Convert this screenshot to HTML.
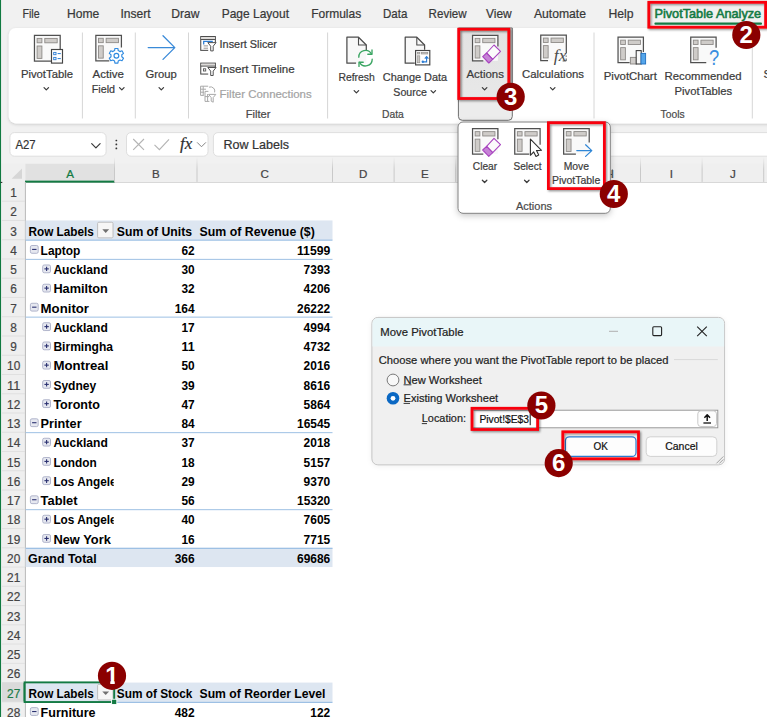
<!DOCTYPE html>
<html lang="en"><head><meta charset="utf-8"><title>Move PivotTable</title>
<style>
html,body{margin:0;padding:0;background:#fff;}
body{width:767px;height:717px;overflow:hidden;}
svg{display:block;font-family:"Liberation Sans", sans-serif;}
text{white-space:pre;}
</style></head><body>
<svg width="767" height="717" viewBox="0 0 767 717">
<defs>
<filter id="rsh" x="-20%" y="-20%" width="150%" height="150%"><feDropShadow dx="1.2" dy="1.2" stdDeviation="1.1" flood-color="#000" flood-opacity="0.45"/></filter>
<filter id="psh" x="-10%" y="-10%" width="120%" height="130%"><feDropShadow dx="0" dy="2" stdDeviation="3" flood-color="#000" flood-opacity="0.22"/></filter>
<filter id="dsh" x="-10%" y="-10%" width="120%" height="130%"><feDropShadow dx="0" dy="1" stdDeviation="2.5" flood-color="#000" flood-opacity="0.06"/></filter>
<filter id="ribsh" x="-5%" y="-10%" width="110%" height="130%"><feDropShadow dx="0" dy="1" stdDeviation="1.6" flood-color="#000" flood-opacity="0.16"/></filter>
<linearGradient id="actg" x1="0" y1="0" x2="0" y2="1"><stop offset="0" stop-color="#c9cccb"/><stop offset="0.06" stop-color="#e3e3e3"/><stop offset="1" stop-color="#e8e8e8"/></linearGradient>
<clipPath id="cA"><rect x="25" y="180" width="88.7" height="540"/></clipPath>
<linearGradient id="sepg" gradientUnits="userSpaceOnUse" x1="0" y1="157" x2="0" y2="169"><stop offset="0" stop-color="#cdcdcd" stop-opacity="0"/><stop offset="1" stop-color="#c9c9c9" stop-opacity="1"/></linearGradient>
<linearGradient id="actl" x1="0" y1="0" x2="1" y2="0"><stop offset="0" stop-color="#b9bdbc" stop-opacity="0.9"/><stop offset="1" stop-color="#d8d8d8" stop-opacity="0"/></linearGradient>
</defs>

<rect x="0.00" y="0.00" width="767.00" height="182.40" fill="#f1f1f1"/>
<rect x="0.00" y="182.40" width="767.00" height="534.60" fill="#fff"/>
<rect x="8.8" y="27.9" width="780" height="95.5" rx="7" fill="#fff" filter="url(#ribsh)"/>
<text x="22.4" y="17.8" font-size="12.2" font-weight="400" fill="#383838" stroke="#383838" stroke-width="0.22" text-anchor="start" textLength="17.2" lengthAdjust="spacingAndGlyphs">File</text>
<text x="67.0" y="17.8" font-size="12.2" font-weight="400" fill="#383838" stroke="#383838" stroke-width="0.22" text-anchor="start" textLength="32.3" lengthAdjust="spacingAndGlyphs">Home</text>
<text x="120.5" y="17.8" font-size="12.2" font-weight="400" fill="#383838" stroke="#383838" stroke-width="0.22" text-anchor="start" textLength="30.2" lengthAdjust="spacingAndGlyphs">Insert</text>
<text x="171.3" y="17.8" font-size="12.2" font-weight="400" fill="#383838" stroke="#383838" stroke-width="0.22" text-anchor="start" textLength="28.3" lengthAdjust="spacingAndGlyphs">Draw</text>
<text x="221.7" y="17.8" font-size="12.2" font-weight="400" fill="#383838" stroke="#383838" stroke-width="0.22" text-anchor="start" textLength="67.3" lengthAdjust="spacingAndGlyphs">Page Layout</text>
<text x="311.2" y="17.8" font-size="12.2" font-weight="400" fill="#383838" stroke="#383838" stroke-width="0.22" text-anchor="start" textLength="50.0" lengthAdjust="spacingAndGlyphs">Formulas</text>
<text x="383.0" y="17.8" font-size="12.2" font-weight="400" fill="#383838" stroke="#383838" stroke-width="0.22" text-anchor="start" textLength="24.4" lengthAdjust="spacingAndGlyphs">Data</text>
<text x="428.6" y="17.8" font-size="12.2" font-weight="400" fill="#383838" stroke="#383838" stroke-width="0.22" text-anchor="start" textLength="38.0" lengthAdjust="spacingAndGlyphs">Review</text>
<text x="486.0" y="17.8" font-size="12.2" font-weight="400" fill="#383838" stroke="#383838" stroke-width="0.22" text-anchor="start" textLength="25.7" lengthAdjust="spacingAndGlyphs">View</text>
<text x="533.9" y="17.8" font-size="12.2" font-weight="400" fill="#383838" stroke="#383838" stroke-width="0.22" text-anchor="start" textLength="52.1" lengthAdjust="spacingAndGlyphs">Automate</text>
<text x="608.4" y="17.8" font-size="12.2" font-weight="400" fill="#383838" stroke="#383838" stroke-width="0.22" text-anchor="start" textLength="25.1" lengthAdjust="spacingAndGlyphs">Help</text>
<text x="654.4" y="17.8" font-size="12.2" font-weight="400" fill="#137a43" stroke="#137a43" stroke-width="0.55" text-anchor="start" textLength="106.8" lengthAdjust="spacingAndGlyphs">PivotTable Analyze</text>
<rect x="654.40" y="22.60" width="107.60" height="2.20" fill="#137a43" rx="1"/>
<line x1="82.40" y1="32.50" x2="82.40" y2="118.50" stroke="#d6d6d6" stroke-width="1"/>
<line x1="135.30" y1="32.50" x2="135.30" y2="118.50" stroke="#d6d6d6" stroke-width="1"/>
<line x1="188.50" y1="32.50" x2="188.50" y2="118.50" stroke="#d6d6d6" stroke-width="1"/>
<line x1="327.60" y1="32.50" x2="327.60" y2="118.50" stroke="#d6d6d6" stroke-width="1"/>
<line x1="594.00" y1="32.50" x2="594.00" y2="118.50" stroke="#d6d6d6" stroke-width="1"/>
<line x1="752.30" y1="32.50" x2="752.30" y2="118.50" stroke="#d6d6d6" stroke-width="1"/>
<g transform="translate(33.80 34.80) scale(1.000)">
<rect x="0.6" y="0.6" width="25.8" height="25.8" fill="#f9f9f9"/>
<path d="M17.4 26.4H0.65V0.65H26.4V14.4" fill="none" stroke="#505050" stroke-width="1.25" stroke-linejoin="miter"/>
<rect x="3.3" y="3.6" width="4.8" height="4.4" fill="#cfccc9" stroke="#8d8a87" stroke-width="0.9"/>
<rect x="11" y="3.6" width="12.4" height="4.4" fill="#cfccc9" stroke="#8d8a87" stroke-width="0.9"/>
<rect x="3.3" y="11.2" width="4.8" height="12.4" fill="#cfccc9" stroke="#8d8a87" stroke-width="0.9"/>
</g>
<rect x="51.5" y="49.5" width="11" height="13.6" fill="#fff" stroke="#444" stroke-width="1.15"/>
<rect x="53.7" y="52.4" width="2.3" height="2.3" fill="#fff" stroke="#2b7cd3" stroke-width="0.9"/><rect x="53.7" y="57.4" width="2.3" height="2.3" fill="#fff" stroke="#2b7cd3" stroke-width="0.9"/>
<path d="M57.6 53.6h3.2M57.6 58.6h3.2" stroke="#2b7cd3" stroke-width="1"/>
<text x="20.9" y="77.7" font-size="11.6" font-weight="400" fill="#3b3b3b" stroke="#3b3b3b" stroke-width="0.22" text-anchor="start" textLength="52.1" lengthAdjust="spacingAndGlyphs">PivotTable</text>
<path d="M44.05 87.67 L46.30 89.92 L48.55 87.67" fill="none" stroke="#3a3a3a" stroke-width="1.25" stroke-linecap="round" stroke-linejoin="round"/>
<g transform="translate(95.20 34.70) scale(0.993)">
<rect x="0.6" y="0.6" width="25.8" height="25.8" fill="#f9f9f9"/>
<path d="M14.2 26.4H0.65V0.65H26.4V13" fill="none" stroke="#505050" stroke-width="1.25" stroke-linejoin="miter"/>
<rect x="3.3" y="3.6" width="4.8" height="4.4" fill="#cfccc9" stroke="#8d8a87" stroke-width="0.9"/>
<rect x="11" y="3.6" width="12.4" height="4.4" fill="#cfccc9" stroke="#8d8a87" stroke-width="0.9"/>
<rect x="3.3" y="11.2" width="4.8" height="12.4" fill="#cfccc9" stroke="#8d8a87" stroke-width="0.9"/>
</g>
<path d="M114.57 50.61 L114.91 48.45 L117.89 48.45 L118.23 50.61 L119.97 51.62 L122.02 50.83 L123.51 53.42 L121.81 54.80 L121.81 56.80 L123.51 58.18 L122.02 60.77 L119.97 59.98 L118.23 60.99 L117.89 63.15 L114.91 63.15 L114.57 60.99 L112.83 59.98 L110.78 60.77 L109.29 58.18 L110.99 56.80 L110.99 54.80 L109.29 53.42 L110.78 50.83 L112.83 51.62Z" fill="#fff" stroke="#2f8ae0" stroke-width="1.15" stroke-linejoin="round"/>
<circle cx="116.4" cy="55.8" r="2.4" fill="#fff" stroke="#2f8ae0" stroke-width="1.15"/>
<text x="92.6" y="77.7" font-size="11.6" font-weight="400" fill="#3b3b3b" stroke="#3b3b3b" stroke-width="0.22" text-anchor="start" textLength="31.3" lengthAdjust="spacingAndGlyphs">Active</text>
<text x="91.8" y="92.8" font-size="11.6" font-weight="400" fill="#3b3b3b" stroke="#3b3b3b" stroke-width="0.22" text-anchor="start" textLength="23.2" lengthAdjust="spacingAndGlyphs">Field</text>
<path d="M119.55 87.67 L121.80 89.92 L124.05 87.67" fill="none" stroke="#3a3a3a" stroke-width="1.25" stroke-linecap="round" stroke-linejoin="round"/>
<path d="M148.2 47.6H174.4M163 35.7L174.8 47.6L163 59.4" fill="none" stroke="#3a8ad8" stroke-width="1.3" stroke-linecap="round" stroke-linejoin="round"/>
<text x="145.5" y="77.7" font-size="11.6" font-weight="400" fill="#3b3b3b" stroke="#3b3b3b" stroke-width="0.22" text-anchor="start" textLength="31.3" lengthAdjust="spacingAndGlyphs">Group</text>
<path d="M159.05 87.67 L161.30 89.92 L163.55 87.67" fill="none" stroke="#3a3a3a" stroke-width="1.25" stroke-linecap="round" stroke-linejoin="round"/>
<g transform="translate(200.20 36.00)">
<rect x="0.55" y="0.55" width="14.6" height="13.8" fill="#fff" stroke="#4a4a4a" stroke-width="1.05"/>
<rect x="1.1" y="1.1" width="13.5" height="2" fill="#dddbd9"/>
<path d="M0.6 3.5H15.1" stroke="#4a4a4a" stroke-width="0.95"/>
<path d="M3.5 8.4V5.3H12.6" fill="none" stroke="#2b7cd3" stroke-width="1.25"/>
<path d="M3.4 9.9H7.8M3.4 12.2H7.8" stroke="#8f8d8b" stroke-width="0.95"/>
<rect x="8" y="6.4" width="8.6" height="9.4" fill="#fff"/>
<path d="M7.6 6.6H15.9L13 10.2V14.9H10.5V10.2Z" fill="#fff" stroke="#4a4a4a" stroke-width="0.95" stroke-linejoin="round"/>
</g>
<text x="219.6" y="48.0" font-size="11.6" font-weight="400" fill="#3b3b3b" stroke="#3b3b3b" stroke-width="0.22" text-anchor="start" textLength="57.4" lengthAdjust="spacingAndGlyphs">Insert Slicer</text>
<g transform="translate(200.20 62.60)">
<rect x="0.55" y="0.55" width="14.6" height="10.9" fill="#fff" stroke="#4a4a4a" stroke-width="1.05"/>
<rect x="1.1" y="1.1" width="13.5" height="2" fill="#dddbd9"/>
<path d="M0.6 3.5H15.1" stroke="#4a4a4a" stroke-width="0.95"/>
<rect x="3.3" y="6.2" width="2.2" height="2.2" fill="#fff" stroke="#555" stroke-width="0.9"/>
<rect x="8" y="4.6" width="8.6" height="8.6" fill="#fff"/>
<path d="M7.6 4.9H15.9L13 8.5V12.9H10.5V8.5Z" fill="#fff" stroke="#4a4a4a" stroke-width="0.95" stroke-linejoin="round"/>
</g>
<text x="219.6" y="73.0" font-size="11.6" font-weight="400" fill="#3b3b3b" stroke="#3b3b3b" stroke-width="0.22" text-anchor="start" textLength="75.1" lengthAdjust="spacingAndGlyphs">Insert Timeline</text>
<g opacity="0.85" fill="none" stroke="#9a9a9a" stroke-width="1">
<path d="M200.6 86.2H208.2M200.6 86.2V95.4H203.8M203.2 86.2V95.4M200.6 89.2H206M200.6 92.2H204"/>
<path d="M205 91.4V101.4H209.4M205 91.4H208.4M207.6 94V101.4M205 96.6H209"/>
<path d="M209 87.2A4.2 4.2 0 0 1 214.6 92.4"/>
<path d="M208.6 94.4H215.8L213.2 97.6V102.2L211.2 101.2V97.6Z" fill="#fff" stroke-linejoin="round"/>
</g>
<text x="219.6" y="97.8" font-size="11.6" font-weight="400" fill="#a3a3a3" stroke="#a3a3a3" stroke-width="0.22" text-anchor="start" textLength="92.1" lengthAdjust="spacingAndGlyphs">Filter Connections</text>
<text x="245.7" y="117.6" font-size="11.4" font-weight="400" fill="#4a4a4a" stroke="#4a4a4a" stroke-width="0.22" text-anchor="start" textLength="24.8" lengthAdjust="spacingAndGlyphs">Filter</text>
<path d="M346.90 37.20H358.50L366.30 45.00V63.20H346.90Z" fill="#f8f8f8"/>
<path d="M356.10 63.20H346.90V37.20H358.50L366.30 45.00V50.40" fill="none" stroke="#4d4d4d" stroke-width="1.25" stroke-linejoin="round"/>
<path d="M358.50 37.20V45.00H366.30" fill="none" stroke="#4d4d4d" stroke-width="1.1" stroke-linejoin="round"/>
<path d="M358.8 57.2A6.7 6.7 0 0 1 371.4 54M372.2 59.2A6.7 6.7 0 0 1 359.6 62.4" fill="none" stroke="#3aa562" stroke-width="1.35" stroke-linecap="round"/>
<path d="M372 50V54.2H367.8M359 66.4V62.2H363.2" fill="none" stroke="#3aa562" stroke-width="1.35" stroke-linecap="round" stroke-linejoin="round"/>
<text x="338.4" y="80.9" font-size="11.6" font-weight="400" fill="#3b3b3b" stroke="#3b3b3b" stroke-width="0.22" text-anchor="start" textLength="36.5" lengthAdjust="spacingAndGlyphs">Refresh</text>
<path d="M354.15 90.67 L356.40 92.92 L358.65 90.67" fill="none" stroke="#3a3a3a" stroke-width="1.25" stroke-linecap="round" stroke-linejoin="round"/>
<path d="M405.20 37.20H416.80L424.60 45.00V63.20H405.20Z" fill="#f8f8f8"/>
<path d="M414.80 63.20H405.20V37.20H416.80L424.60 45.00V49.80" fill="none" stroke="#4d4d4d" stroke-width="1.25" stroke-linejoin="round"/>
<path d="M416.80 37.20V45.00H424.60" fill="none" stroke="#4d4d4d" stroke-width="1.1" stroke-linejoin="round"/>
<rect x="415.6" y="50.5" width="14.2" height="14.4" fill="#fff" stroke="#444" stroke-width="1.15"/>
<rect x="417.6" y="52.4" width="2.2" height="1.6" fill="#c9c6c3" stroke="#8d8a87" stroke-width="0.6"/><rect x="421.2" y="52.4" width="6.6" height="1.6" fill="#c9c6c3" stroke="#8d8a87" stroke-width="0.6"/><rect x="417.6" y="55.8" width="2.2" height="7" fill="#c9c6c3" stroke="#8d8a87" stroke-width="0.6"/>
<path d="M422.8 61.8H426.6V57M424.8 58.6L426.6 56.6L428.4 58.6" fill="none" stroke="#2b7cd3" stroke-width="1.15"/>
<circle cx="422.8" cy="61.8" r="1.2" fill="#2b7cd3"/>
<text x="382.8" y="80.9" font-size="11.6" font-weight="400" fill="#3b3b3b" stroke="#3b3b3b" stroke-width="0.22" text-anchor="start" textLength="64.4" lengthAdjust="spacingAndGlyphs">Change Data</text>
<text x="393.3" y="95.8" font-size="11.6" font-weight="400" fill="#3b3b3b" stroke="#3b3b3b" stroke-width="0.22" text-anchor="start" textLength="33.7" lengthAdjust="spacingAndGlyphs">Source</text>
<path d="M431.05 90.67 L433.30 92.92 L435.55 90.67" fill="none" stroke="#3a3a3a" stroke-width="1.25" stroke-linecap="round" stroke-linejoin="round"/>
<text x="382.0" y="117.6" font-size="11.4" font-weight="400" fill="#4a4a4a" stroke="#4a4a4a" stroke-width="0.22" text-anchor="start" textLength="21.8" lengthAdjust="spacingAndGlyphs">Data</text>
<path d="M458.4 28H512.3V116.4Q512.3 120.3 508.4 120.3H462.3Q458.4 120.3 458.4 116.4Z" fill="#ececec" stroke="#6e6e6e" stroke-width="1"/>
<rect x="458.4" y="28.4" width="51.6" height="71" fill="url(#actg)"/>
<rect x="460" y="30" width="4.2" height="68" fill="url(#actl)"/>
<rect x="510" y="29" width="1.8" height="70" fill="#b4b9b7"/>
<g transform="translate(471.90 34.80) scale(0.985)">
<rect x="0.6" y="0.6" width="25.8" height="25.8" fill="#f9f9f9"/>
<path d="M11.6 26.4H0.65V0.65H26.4V12" fill="none" stroke="#505050" stroke-width="1.25" stroke-linejoin="miter"/>
<rect x="3.3" y="3.6" width="4.8" height="4.4" fill="#cfccc9" stroke="#8d8a87" stroke-width="0.9"/>
<rect x="11" y="3.6" width="12.4" height="4.4" fill="#cfccc9" stroke="#8d8a87" stroke-width="0.9"/>
<rect x="3.3" y="11.2" width="4.8" height="12.4" fill="#cfccc9" stroke="#8d8a87" stroke-width="0.9"/>
</g>
<g transform="translate(471.90 34.80)">
<path d="M14.7 18.2L22.1 10.2L28.6 16.6L20.8 24.6Z" fill="#fbfbfb" stroke="#a844bf" stroke-width="1.1" stroke-linejoin="round"/>
<path d="M10.8 21.9L14.7 18.2L20.8 24.6L16.9 28.2Z" fill="#c683d6" stroke="#a844bf" stroke-width="1.1" stroke-linejoin="round"/>
</g>
<text x="466.4" y="77.7" font-size="11.6" font-weight="400" fill="#3b3b3b" stroke="#3b3b3b" stroke-width="0.22" text-anchor="start" textLength="37.5" lengthAdjust="spacingAndGlyphs">Actions</text>
<path d="M482.35 87.67 L484.60 89.92 L486.85 87.67" fill="none" stroke="#3a3a3a" stroke-width="1.25" stroke-linecap="round" stroke-linejoin="round"/>
<rect x="458.70" y="29.20" width="50.10" height="69.30" fill="none" stroke="#f9000a" stroke-width="2.8" filter="url(#rsh)"/>
<g transform="translate(540.10 34.50) scale(0.993)">
<rect x="0.6" y="0.6" width="25.8" height="25.8" fill="#f9f9f9"/>
<path d="M8 26.4H0.65V0.65H26.4V19" fill="none" stroke="#505050" stroke-width="1.25" stroke-linejoin="miter"/>
<rect x="3.3" y="3.6" width="4.8" height="4.4" fill="#cfccc9" stroke="#8d8a87" stroke-width="0.9"/>
<rect x="11" y="3.6" width="12.4" height="4.4" fill="#cfccc9" stroke="#8d8a87" stroke-width="0.9"/>
<rect x="3.3" y="11.2" width="4.8" height="12.4" fill="#cfccc9" stroke="#8d8a87" stroke-width="0.9"/>
</g>
<path d="M566.2 55.4V56.8M566.2 58.4V61M566.2 61H562.6" fill="none" stroke="#666" stroke-width="1.1"/>
<text x="553.8" y="60.6" font-family="'Liberation Serif', serif" font-style="italic" font-size="17.5" fill="#4a4a4a">fx</text>
<text x="522.0" y="77.7" font-size="11.6" font-weight="400" fill="#3b3b3b" stroke="#3b3b3b" stroke-width="0.22" text-anchor="start" textLength="62.0" lengthAdjust="spacingAndGlyphs">Calculations</text>
<path d="M550.45 87.67 L552.70 89.92 L554.95 87.67" fill="none" stroke="#3a3a3a" stroke-width="1.25" stroke-linecap="round" stroke-linejoin="round"/>
<g transform="translate(617.40 36.60) scale(0.985)">
<rect x="0.6" y="0.6" width="25.8" height="25.8" fill="#f9f9f9"/>
<path d="M12.4 26.4H0.65V0.65H26.4V15.6" fill="none" stroke="#505050" stroke-width="1.25" stroke-linejoin="miter"/>
<rect x="3.3" y="3.6" width="4.8" height="4.4" fill="#cfccc9" stroke="#8d8a87" stroke-width="0.9"/>
<rect x="11" y="3.6" width="12.4" height="4.4" fill="#cfccc9" stroke="#8d8a87" stroke-width="0.9"/>
<rect x="3.3" y="11.2" width="4.8" height="12.4" fill="#cfccc9" stroke="#8d8a87" stroke-width="0.9"/>
</g>
<rect x="630.4" y="57.4" width="6" height="6.6" fill="#d0cdca" stroke="#8d8a87" stroke-width="0.95"/>
<rect x="636.2" y="50.6" width="5" height="13.4" fill="#fafafa" stroke="#3a3a3a" stroke-width="1.05"/>
<rect x="641" y="53.4" width="4.6" height="10.6" fill="#55a6ea" stroke="#2473c2" stroke-width="0.95"/>
<text x="603.8" y="79.8" font-size="11.6" font-weight="400" fill="#3b3b3b" stroke="#3b3b3b" stroke-width="0.22" text-anchor="start" textLength="53.0" lengthAdjust="spacingAndGlyphs">PivotChart</text>
<g transform="translate(690.10 36.60) scale(0.985)">
<rect x="0.6" y="0.6" width="25.8" height="25.8" fill="#f9f9f9"/>
<path d="M16.4 26.4H0.65V0.65H26.4V11.4" fill="none" stroke="#505050" stroke-width="1.25" stroke-linejoin="miter"/>
<rect x="3.3" y="3.6" width="4.8" height="4.4" fill="#cfccc9" stroke="#8d8a87" stroke-width="0.9"/>
<rect x="11" y="3.6" width="12.4" height="4.4" fill="#cfccc9" stroke="#8d8a87" stroke-width="0.9"/>
<rect x="3.3" y="11.2" width="4.8" height="12.4" fill="#cfccc9" stroke="#8d8a87" stroke-width="0.9"/>
</g>
<text x="709.0" y="65.3" font-size="22.5" font-weight="400" fill="#3a8ee0" text-anchor="start" textLength="10.2" lengthAdjust="spacingAndGlyphs">?</text>
<text x="664.6" y="79.8" font-size="11.6" font-weight="400" fill="#3b3b3b" stroke="#3b3b3b" stroke-width="0.22" text-anchor="start" textLength="76.9" lengthAdjust="spacingAndGlyphs">Recommended</text>
<text x="674.6" y="94.9" font-size="11.6" font-weight="400" fill="#3b3b3b" stroke="#3b3b3b" stroke-width="0.22" text-anchor="start" textLength="57.6" lengthAdjust="spacingAndGlyphs">PivotTables</text>
<text x="660.6" y="117.6" font-size="11.4" font-weight="400" fill="#4a4a4a" stroke="#4a4a4a" stroke-width="0.22" text-anchor="start" textLength="24.0" lengthAdjust="spacingAndGlyphs">Tools</text>
<text x="763.4" y="77.7" font-size="11.6" font-weight="400" fill="#3b3b3b" stroke="#3b3b3b" stroke-width="0.22" text-anchor="start">S</text>
<rect x="648.80" y="2.30" width="116.80" height="24.90" fill="none" stroke="#f9000a" stroke-width="2.8" filter="url(#rsh)"/>
<circle cx="746.3" cy="35.0" r="14.1" fill="#8b0000"/>
<text x="746.3" y="42.8" font-size="24" font-weight="700" fill="#fff" text-anchor="middle">2</text>
<circle cx="510.7" cy="96.8" r="14.1" fill="#8b0000"/>
<text x="510.7" y="104.6" font-size="24" font-weight="700" fill="#fff" text-anchor="middle">3</text>
<rect x="9.90" y="132.60" width="96.20" height="23.60" fill="#fff" stroke="#dedede" stroke-width="1" rx="4.5"/>
<text x="15.4" y="148.8" font-size="12.8" font-weight="400" fill="#333" stroke="#333" stroke-width="0.22" text-anchor="start" textLength="20.2" lengthAdjust="spacingAndGlyphs">A27</text>
<path d="M91.70 143.60 L95.90 147.80 L100.10 143.60" fill="none" stroke="#3a3a3a" stroke-width="1.2" stroke-linecap="round" stroke-linejoin="round"/>
<rect x="115.5" y="139.65" width="1.7" height="1.7" rx="0.5" fill="#333"/>
<rect x="115.5" y="143.55" width="1.7" height="1.7" rx="0.5" fill="#333"/>
<rect x="115.5" y="147.45" width="1.7" height="1.7" rx="0.5" fill="#333"/>
<rect x="126.50" y="132.60" width="81.50" height="23.60" fill="#fff" stroke="#dedede" stroke-width="1" rx="4.5"/>
<path d="M133.2 139L144 149.8M144 139L133.2 149.8" stroke="#b4b4b4" stroke-width="1.15"/>
<path d="M154.5 144.8L159.4 149.6L169 139.4" fill="none" stroke="#b4b4b4" stroke-width="1.15"/>
<text x="180" y="149.3" font-family="'Liberation Serif', serif" font-style="italic" font-size="17" fill="#2e2e2e" stroke="#2e2e2e" stroke-width="0.2">fx</text>
<path d="M197.40 142.65 L201.50 146.75 L205.60 142.65" fill="none" stroke="#858585" stroke-width="1.0" stroke-linecap="round" stroke-linejoin="round"/>
<rect x="213.40" y="132.60" width="600.00" height="23.60" fill="#fff" stroke="#dedede" stroke-width="1" rx="4.5"/>
<text x="223.5" y="148.8" font-size="12.8" font-weight="400" fill="#333" stroke="#333" stroke-width="0.22" text-anchor="start" textLength="65.5" lengthAdjust="spacingAndGlyphs">Row Labels</text>
<rect x="0.00" y="163.80" width="767.00" height="18.60" fill="#efefef"/>
<rect x="25.40" y="163.80" width="89.10" height="18.60" fill="#e1e1e1"/>
<rect x="25.00" y="180.80" width="89.50" height="1.80" fill="#137a43"/>
<line x1="0.00" y1="182.50" x2="767.00" y2="182.50" stroke="#cfcfcf" stroke-width="0.8"/>
<rect x="25.00" y="180.80" width="89.50" height="1.80" fill="#137a43"/>
<text x="70.0" y="177.5" font-size="11.6" font-weight="400" fill="#137a43" stroke="#137a43" stroke-width="0.22" text-anchor="middle">A</text>
<rect x="114.00" y="157.00" width="1.00" height="24.90" fill="url(#sepg)"/>
<text x="155.8" y="177.5" font-size="11.6" font-weight="400" fill="#444" stroke="#444" stroke-width="0.22" text-anchor="middle">B</text>
<rect x="196.50" y="157.00" width="1.00" height="24.90" fill="url(#sepg)"/>
<text x="264.8" y="177.5" font-size="11.6" font-weight="400" fill="#444" stroke="#444" stroke-width="0.22" text-anchor="middle">C</text>
<rect x="332.00" y="157.00" width="1.00" height="24.90" fill="url(#sepg)"/>
<text x="363.3" y="177.5" font-size="11.6" font-weight="400" fill="#444" stroke="#444" stroke-width="0.22" text-anchor="middle">D</text>
<rect x="393.60" y="157.00" width="1.00" height="24.90" fill="url(#sepg)"/>
<text x="424.9" y="177.5" font-size="11.6" font-weight="400" fill="#444" stroke="#444" stroke-width="0.22" text-anchor="middle">E</text>
<rect x="455.20" y="157.00" width="1.00" height="24.90" fill="url(#sepg)"/>
<text x="486.5" y="177.5" font-size="11.6" font-weight="400" fill="#444" stroke="#444" stroke-width="0.22" text-anchor="middle">F</text>
<rect x="516.80" y="157.00" width="1.00" height="24.90" fill="url(#sepg)"/>
<text x="548.1" y="177.5" font-size="11.6" font-weight="400" fill="#444" stroke="#444" stroke-width="0.22" text-anchor="middle">G</text>
<rect x="578.40" y="157.00" width="1.00" height="24.90" fill="url(#sepg)"/>
<text x="609.7" y="177.5" font-size="11.6" font-weight="400" fill="#444" stroke="#444" stroke-width="0.22" text-anchor="middle">H</text>
<rect x="640.00" y="157.00" width="1.00" height="24.90" fill="url(#sepg)"/>
<text x="671.3" y="177.5" font-size="11.6" font-weight="400" fill="#444" stroke="#444" stroke-width="0.22" text-anchor="middle">I</text>
<rect x="701.60" y="157.00" width="1.00" height="24.90" fill="url(#sepg)"/>
<text x="732.9" y="177.5" font-size="11.6" font-weight="400" fill="#444" stroke="#444" stroke-width="0.22" text-anchor="middle">J</text>
<rect x="763.20" y="157.00" width="1.00" height="24.90" fill="url(#sepg)"/>
<text x="794.5" y="177.5" font-size="11.6" font-weight="400" fill="#444" stroke="#444" stroke-width="0.22" text-anchor="middle">K</text>
<path d="M22 168.4V178.8H11.6Z" fill="#d6d6d6"/>
<rect x="0.00" y="181.95" width="25.00" height="535.05" fill="#efefef"/>
<line x1="25.40" y1="181.95" x2="25.40" y2="717.00" stroke="#b8b8b8" stroke-width="1"/>
<rect x="2.00" y="682.58" width="23.00" height="19.25" fill="#dadada"/>
<rect x="23.60" y="682.58" width="1.80" height="19.25" fill="#137a43"/>
<text x="13.5" y="196.9" font-size="12.6" font-weight="400" fill="#444" stroke="#444" stroke-width="0.22" text-anchor="middle" textLength="6.6" lengthAdjust="spacingAndGlyphs">1</text>
<line x1="2.00" y1="201.20" x2="25.00" y2="201.20" stroke="#dcdcdc" stroke-width="0.8"/>
<text x="13.5" y="216.2" font-size="12.6" font-weight="400" fill="#444" stroke="#444" stroke-width="0.22" text-anchor="middle" textLength="6.6" lengthAdjust="spacingAndGlyphs">2</text>
<line x1="2.00" y1="220.46" x2="25.00" y2="220.46" stroke="#dcdcdc" stroke-width="0.8"/>
<text x="13.5" y="235.5" font-size="12.6" font-weight="400" fill="#444" stroke="#444" stroke-width="0.22" text-anchor="middle" textLength="6.6" lengthAdjust="spacingAndGlyphs">3</text>
<line x1="2.00" y1="239.71" x2="25.00" y2="239.71" stroke="#dcdcdc" stroke-width="0.8"/>
<text x="13.5" y="254.7" font-size="12.6" font-weight="400" fill="#444" stroke="#444" stroke-width="0.22" text-anchor="middle" textLength="6.6" lengthAdjust="spacingAndGlyphs">4</text>
<line x1="2.00" y1="258.97" x2="25.00" y2="258.97" stroke="#dcdcdc" stroke-width="0.8"/>
<text x="13.5" y="274.0" font-size="12.6" font-weight="400" fill="#444" stroke="#444" stroke-width="0.22" text-anchor="middle" textLength="6.6" lengthAdjust="spacingAndGlyphs">5</text>
<line x1="2.00" y1="278.22" x2="25.00" y2="278.22" stroke="#dcdcdc" stroke-width="0.8"/>
<text x="13.5" y="293.2" font-size="12.6" font-weight="400" fill="#444" stroke="#444" stroke-width="0.22" text-anchor="middle" textLength="6.6" lengthAdjust="spacingAndGlyphs">6</text>
<line x1="2.00" y1="297.48" x2="25.00" y2="297.48" stroke="#dcdcdc" stroke-width="0.8"/>
<text x="13.5" y="312.5" font-size="12.6" font-weight="400" fill="#444" stroke="#444" stroke-width="0.22" text-anchor="middle" textLength="6.6" lengthAdjust="spacingAndGlyphs">7</text>
<line x1="2.00" y1="316.74" x2="25.00" y2="316.74" stroke="#dcdcdc" stroke-width="0.8"/>
<text x="13.5" y="331.7" font-size="12.6" font-weight="400" fill="#444" stroke="#444" stroke-width="0.22" text-anchor="middle" textLength="6.6" lengthAdjust="spacingAndGlyphs">8</text>
<line x1="2.00" y1="335.99" x2="25.00" y2="335.99" stroke="#dcdcdc" stroke-width="0.8"/>
<text x="13.5" y="351.0" font-size="12.6" font-weight="400" fill="#444" stroke="#444" stroke-width="0.22" text-anchor="middle" textLength="6.6" lengthAdjust="spacingAndGlyphs">9</text>
<line x1="2.00" y1="355.25" x2="25.00" y2="355.25" stroke="#dcdcdc" stroke-width="0.8"/>
<text x="13.7" y="370.2" font-size="12.6" font-weight="400" fill="#444" stroke="#444" stroke-width="0.22" text-anchor="middle" textLength="13.2" lengthAdjust="spacingAndGlyphs">10</text>
<line x1="2.00" y1="374.50" x2="25.00" y2="374.50" stroke="#dcdcdc" stroke-width="0.8"/>
<text x="13.7" y="389.5" font-size="12.6" font-weight="400" fill="#444" stroke="#444" stroke-width="0.22" text-anchor="middle" textLength="13.2" lengthAdjust="spacingAndGlyphs">11</text>
<line x1="2.00" y1="393.75" x2="25.00" y2="393.75" stroke="#dcdcdc" stroke-width="0.8"/>
<text x="13.7" y="408.8" font-size="12.6" font-weight="400" fill="#444" stroke="#444" stroke-width="0.22" text-anchor="middle" textLength="13.2" lengthAdjust="spacingAndGlyphs">12</text>
<line x1="2.00" y1="413.01" x2="25.00" y2="413.01" stroke="#dcdcdc" stroke-width="0.8"/>
<text x="13.7" y="428.0" font-size="12.6" font-weight="400" fill="#444" stroke="#444" stroke-width="0.22" text-anchor="middle" textLength="13.2" lengthAdjust="spacingAndGlyphs">13</text>
<line x1="2.00" y1="432.26" x2="25.00" y2="432.26" stroke="#dcdcdc" stroke-width="0.8"/>
<text x="13.7" y="447.3" font-size="12.6" font-weight="400" fill="#444" stroke="#444" stroke-width="0.22" text-anchor="middle" textLength="13.2" lengthAdjust="spacingAndGlyphs">14</text>
<line x1="2.00" y1="451.52" x2="25.00" y2="451.52" stroke="#dcdcdc" stroke-width="0.8"/>
<text x="13.7" y="466.5" font-size="12.6" font-weight="400" fill="#444" stroke="#444" stroke-width="0.22" text-anchor="middle" textLength="13.2" lengthAdjust="spacingAndGlyphs">15</text>
<line x1="2.00" y1="470.77" x2="25.00" y2="470.77" stroke="#dcdcdc" stroke-width="0.8"/>
<text x="13.7" y="485.8" font-size="12.6" font-weight="400" fill="#444" stroke="#444" stroke-width="0.22" text-anchor="middle" textLength="13.2" lengthAdjust="spacingAndGlyphs">16</text>
<line x1="2.00" y1="490.03" x2="25.00" y2="490.03" stroke="#dcdcdc" stroke-width="0.8"/>
<text x="13.7" y="505.0" font-size="12.6" font-weight="400" fill="#444" stroke="#444" stroke-width="0.22" text-anchor="middle" textLength="13.2" lengthAdjust="spacingAndGlyphs">17</text>
<line x1="2.00" y1="509.28" x2="25.00" y2="509.28" stroke="#dcdcdc" stroke-width="0.8"/>
<text x="13.7" y="524.3" font-size="12.6" font-weight="400" fill="#444" stroke="#444" stroke-width="0.22" text-anchor="middle" textLength="13.2" lengthAdjust="spacingAndGlyphs">18</text>
<line x1="2.00" y1="528.54" x2="25.00" y2="528.54" stroke="#dcdcdc" stroke-width="0.8"/>
<text x="13.7" y="543.5" font-size="12.6" font-weight="400" fill="#444" stroke="#444" stroke-width="0.22" text-anchor="middle" textLength="13.2" lengthAdjust="spacingAndGlyphs">19</text>
<line x1="2.00" y1="547.79" x2="25.00" y2="547.79" stroke="#dcdcdc" stroke-width="0.8"/>
<text x="13.7" y="562.8" font-size="12.6" font-weight="400" fill="#444" stroke="#444" stroke-width="0.22" text-anchor="middle" textLength="13.2" lengthAdjust="spacingAndGlyphs">20</text>
<line x1="2.00" y1="567.05" x2="25.00" y2="567.05" stroke="#dcdcdc" stroke-width="0.8"/>
<text x="13.7" y="582.0" font-size="12.6" font-weight="400" fill="#444" stroke="#444" stroke-width="0.22" text-anchor="middle" textLength="13.2" lengthAdjust="spacingAndGlyphs">21</text>
<line x1="2.00" y1="586.30" x2="25.00" y2="586.30" stroke="#dcdcdc" stroke-width="0.8"/>
<text x="13.7" y="601.3" font-size="12.6" font-weight="400" fill="#444" stroke="#444" stroke-width="0.22" text-anchor="middle" textLength="13.2" lengthAdjust="spacingAndGlyphs">22</text>
<line x1="2.00" y1="605.56" x2="25.00" y2="605.56" stroke="#dcdcdc" stroke-width="0.8"/>
<text x="13.7" y="620.6" font-size="12.6" font-weight="400" fill="#444" stroke="#444" stroke-width="0.22" text-anchor="middle" textLength="13.2" lengthAdjust="spacingAndGlyphs">23</text>
<line x1="2.00" y1="624.81" x2="25.00" y2="624.81" stroke="#dcdcdc" stroke-width="0.8"/>
<text x="13.7" y="639.8" font-size="12.6" font-weight="400" fill="#444" stroke="#444" stroke-width="0.22" text-anchor="middle" textLength="13.2" lengthAdjust="spacingAndGlyphs">24</text>
<line x1="2.00" y1="644.07" x2="25.00" y2="644.07" stroke="#dcdcdc" stroke-width="0.8"/>
<text x="13.7" y="659.1" font-size="12.6" font-weight="400" fill="#444" stroke="#444" stroke-width="0.22" text-anchor="middle" textLength="13.2" lengthAdjust="spacingAndGlyphs">25</text>
<line x1="2.00" y1="663.33" x2="25.00" y2="663.33" stroke="#dcdcdc" stroke-width="0.8"/>
<text x="13.7" y="678.3" font-size="12.6" font-weight="400" fill="#444" stroke="#444" stroke-width="0.22" text-anchor="middle" textLength="13.2" lengthAdjust="spacingAndGlyphs">26</text>
<line x1="2.00" y1="682.58" x2="25.00" y2="682.58" stroke="#dcdcdc" stroke-width="0.8"/>
<text x="13.7" y="697.6" font-size="12.6" font-weight="400" fill="#1e7a48" stroke="#1e7a48" stroke-width="0.22" text-anchor="middle" textLength="13.2" lengthAdjust="spacingAndGlyphs">27</text>
<line x1="2.00" y1="701.84" x2="25.00" y2="701.84" stroke="#dcdcdc" stroke-width="0.8"/>
<text x="13.7" y="716.8" font-size="12.6" font-weight="400" fill="#444" stroke="#444" stroke-width="0.22" text-anchor="middle" textLength="13.2" lengthAdjust="spacingAndGlyphs">28</text>
<rect x="0.00" y="0.00" width="1.05" height="717.00" fill="#117a41"/>
<rect x="0.60" y="181.90" width="1.70" height="1.00" fill="#222"/>
<rect x="25.60" y="220.46" width="306.90" height="19.25" fill="#dde6f1"/>
<line x1="25.60" y1="240.21" x2="332.50" y2="240.21" stroke="#9dc0e4" stroke-width="1.2"/>
<text x="28.5" y="235.5" font-size="12.2" font-weight="700" fill="#000" text-anchor="start" textLength="65.4" lengthAdjust="spacingAndGlyphs">Row Labels</text>
<rect x="97.60" y="222.26" width="15.40" height="15.60" fill="#f6f6f6" stroke="#b9b9b9" stroke-width="0.9" rx="1.2"/>
<path d="M102.30 229.26H109.10L105.70 232.96Z" fill="#707070"/>
<text x="116.8" y="235.5" font-size="12.2" font-weight="700" fill="#000" text-anchor="start" textLength="75.2" lengthAdjust="spacingAndGlyphs">Sum of Units</text>
<text x="199.6" y="235.5" font-size="12.2" font-weight="700" fill="#000" text-anchor="start" textLength="115.2" lengthAdjust="spacingAndGlyphs">Sum of Revenue ($)</text>
<rect x="30.40" y="245.51" width="7.80" height="7.80" fill="#e6e8f0" stroke="#a9aec6" stroke-width="0.9" rx="1.5"/>
<path d="M32.10 249.41H36.50" stroke="#2b3170" stroke-width="1.1"/>
<text x="40.6" y="254.7" font-size="12.2" font-weight="700" fill="#000" text-anchor="start" textLength="39.8" lengthAdjust="spacingAndGlyphs">Laptop</text>
<line x1="25.60" y1="259.37" x2="332.50" y2="259.37" stroke="#9dc0e4" stroke-width="1"/>
<text x="194.6" y="254.7" font-size="12.2" font-weight="700" fill="#000" text-anchor="end" textLength="13.2" lengthAdjust="spacingAndGlyphs">62</text>
<text x="330.2" y="254.7" font-size="12.2" font-weight="700" fill="#000" text-anchor="end" textLength="33.2" lengthAdjust="spacingAndGlyphs">11599</text>
<rect x="42.70" y="264.97" width="7.80" height="7.80" fill="#e6e8f0" stroke="#a9aec6" stroke-width="0.9" rx="1.5"/>
<path d="M44.40 268.87H48.80" stroke="#2b3170" stroke-width="1.1"/>
<path d="M46.60 266.67V271.07" stroke="#2b3170" stroke-width="1.1"/>
<text x="53.4" y="274.0" font-size="12.2" font-weight="700" fill="#000" text-anchor="start" textLength="54.4" lengthAdjust="spacingAndGlyphs">Auckland</text>
<text x="194.6" y="274.0" font-size="12.2" font-weight="700" fill="#000" text-anchor="end" textLength="13.2" lengthAdjust="spacingAndGlyphs">30</text>
<text x="330.2" y="274.0" font-size="12.2" font-weight="700" fill="#000" text-anchor="end" textLength="26.6" lengthAdjust="spacingAndGlyphs">7393</text>
<rect x="42.70" y="284.22" width="7.80" height="7.80" fill="#e6e8f0" stroke="#a9aec6" stroke-width="0.9" rx="1.5"/>
<path d="M44.40 288.12H48.80" stroke="#2b3170" stroke-width="1.1"/>
<path d="M46.60 285.92V290.32" stroke="#2b3170" stroke-width="1.1"/>
<text x="53.4" y="293.2" font-size="12.2" font-weight="700" fill="#000" text-anchor="start" textLength="54.4" lengthAdjust="spacingAndGlyphs">Hamilton</text>
<text x="194.6" y="293.2" font-size="12.2" font-weight="700" fill="#000" text-anchor="end" textLength="13.2" lengthAdjust="spacingAndGlyphs">32</text>
<text x="330.2" y="293.2" font-size="12.2" font-weight="700" fill="#000" text-anchor="end" textLength="26.6" lengthAdjust="spacingAndGlyphs">4206</text>
<rect x="30.40" y="303.28" width="7.80" height="7.80" fill="#e6e8f0" stroke="#a9aec6" stroke-width="0.9" rx="1.5"/>
<path d="M32.10 307.18H36.50" stroke="#2b3170" stroke-width="1.1"/>
<text x="40.6" y="312.5" font-size="12.2" font-weight="700" fill="#000" text-anchor="start" textLength="48.4" lengthAdjust="spacingAndGlyphs">Monitor</text>
<line x1="25.60" y1="317.13" x2="332.50" y2="317.13" stroke="#9dc0e4" stroke-width="1"/>
<text x="194.6" y="312.5" font-size="12.2" font-weight="700" fill="#000" text-anchor="end" textLength="19.9" lengthAdjust="spacingAndGlyphs">164</text>
<text x="330.2" y="312.5" font-size="12.2" font-weight="700" fill="#000" text-anchor="end" textLength="33.2" lengthAdjust="spacingAndGlyphs">26222</text>
<rect x="42.70" y="322.74" width="7.80" height="7.80" fill="#e6e8f0" stroke="#a9aec6" stroke-width="0.9" rx="1.5"/>
<path d="M44.40 326.63H48.80" stroke="#2b3170" stroke-width="1.1"/>
<path d="M46.60 324.44V328.84" stroke="#2b3170" stroke-width="1.1"/>
<text x="53.4" y="331.7" font-size="12.2" font-weight="700" fill="#000" text-anchor="start" textLength="54.4" lengthAdjust="spacingAndGlyphs">Auckland</text>
<text x="194.6" y="331.7" font-size="12.2" font-weight="700" fill="#000" text-anchor="end" textLength="13.2" lengthAdjust="spacingAndGlyphs">17</text>
<text x="330.2" y="331.7" font-size="12.2" font-weight="700" fill="#000" text-anchor="end" textLength="26.6" lengthAdjust="spacingAndGlyphs">4994</text>
<rect x="42.70" y="341.99" width="7.80" height="7.80" fill="#e6e8f0" stroke="#a9aec6" stroke-width="0.9" rx="1.5"/>
<path d="M44.40 345.89H48.80" stroke="#2b3170" stroke-width="1.1"/>
<path d="M46.60 343.69V348.09" stroke="#2b3170" stroke-width="1.1"/>
<text x="53.4" y="351.0" font-size="12.2" font-weight="700" fill="#000" text-anchor="start" textLength="59.6" lengthAdjust="spacingAndGlyphs">Birmingha</text>
<text x="194.6" y="351.0" font-size="12.2" font-weight="700" fill="#000" text-anchor="end" textLength="13.2" lengthAdjust="spacingAndGlyphs">11</text>
<text x="330.2" y="351.0" font-size="12.2" font-weight="700" fill="#000" text-anchor="end" textLength="26.6" lengthAdjust="spacingAndGlyphs">4732</text>
<rect x="42.70" y="361.25" width="7.80" height="7.80" fill="#e6e8f0" stroke="#a9aec6" stroke-width="0.9" rx="1.5"/>
<path d="M44.40 365.14H48.80" stroke="#2b3170" stroke-width="1.1"/>
<path d="M46.60 362.94V367.35" stroke="#2b3170" stroke-width="1.1"/>
<text x="53.4" y="370.2" font-size="12.2" font-weight="700" fill="#000" text-anchor="start" textLength="55.0" lengthAdjust="spacingAndGlyphs">Montreal</text>
<text x="194.6" y="370.2" font-size="12.2" font-weight="700" fill="#000" text-anchor="end" textLength="13.2" lengthAdjust="spacingAndGlyphs">50</text>
<text x="330.2" y="370.2" font-size="12.2" font-weight="700" fill="#000" text-anchor="end" textLength="26.6" lengthAdjust="spacingAndGlyphs">2016</text>
<rect x="42.70" y="380.50" width="7.80" height="7.80" fill="#e6e8f0" stroke="#a9aec6" stroke-width="0.9" rx="1.5"/>
<path d="M44.40 384.40H48.80" stroke="#2b3170" stroke-width="1.1"/>
<path d="M46.60 382.20V386.60" stroke="#2b3170" stroke-width="1.1"/>
<text x="53.4" y="389.5" font-size="12.2" font-weight="700" fill="#000" text-anchor="start" textLength="42.8" lengthAdjust="spacingAndGlyphs">Sydney</text>
<text x="194.6" y="389.5" font-size="12.2" font-weight="700" fill="#000" text-anchor="end" textLength="13.2" lengthAdjust="spacingAndGlyphs">39</text>
<text x="330.2" y="389.5" font-size="12.2" font-weight="700" fill="#000" text-anchor="end" textLength="26.6" lengthAdjust="spacingAndGlyphs">8616</text>
<rect x="42.70" y="399.75" width="7.80" height="7.80" fill="#e6e8f0" stroke="#a9aec6" stroke-width="0.9" rx="1.5"/>
<path d="M44.40 403.65H48.80" stroke="#2b3170" stroke-width="1.1"/>
<path d="M46.60 401.45V405.86" stroke="#2b3170" stroke-width="1.1"/>
<text x="53.4" y="408.8" font-size="12.2" font-weight="700" fill="#000" text-anchor="start" textLength="46.4" lengthAdjust="spacingAndGlyphs">Toronto</text>
<text x="194.6" y="408.8" font-size="12.2" font-weight="700" fill="#000" text-anchor="end" textLength="13.2" lengthAdjust="spacingAndGlyphs">47</text>
<text x="330.2" y="408.8" font-size="12.2" font-weight="700" fill="#000" text-anchor="end" textLength="26.6" lengthAdjust="spacingAndGlyphs">5864</text>
<rect x="30.40" y="418.81" width="7.80" height="7.80" fill="#e6e8f0" stroke="#a9aec6" stroke-width="0.9" rx="1.5"/>
<path d="M32.10 422.71H36.50" stroke="#2b3170" stroke-width="1.1"/>
<text x="40.6" y="428.0" font-size="12.2" font-weight="700" fill="#000" text-anchor="start" textLength="41.0" lengthAdjust="spacingAndGlyphs">Printer</text>
<line x1="25.60" y1="432.66" x2="332.50" y2="432.66" stroke="#9dc0e4" stroke-width="1"/>
<text x="194.6" y="428.0" font-size="12.2" font-weight="700" fill="#000" text-anchor="end" textLength="13.2" lengthAdjust="spacingAndGlyphs">84</text>
<text x="330.2" y="428.0" font-size="12.2" font-weight="700" fill="#000" text-anchor="end" textLength="33.2" lengthAdjust="spacingAndGlyphs">16545</text>
<rect x="42.70" y="438.26" width="7.80" height="7.80" fill="#e6e8f0" stroke="#a9aec6" stroke-width="0.9" rx="1.5"/>
<path d="M44.40 442.16H48.80" stroke="#2b3170" stroke-width="1.1"/>
<path d="M46.60 439.96V444.37" stroke="#2b3170" stroke-width="1.1"/>
<text x="53.4" y="447.3" font-size="12.2" font-weight="700" fill="#000" text-anchor="start" textLength="54.4" lengthAdjust="spacingAndGlyphs">Auckland</text>
<text x="194.6" y="447.3" font-size="12.2" font-weight="700" fill="#000" text-anchor="end" textLength="13.2" lengthAdjust="spacingAndGlyphs">37</text>
<text x="330.2" y="447.3" font-size="12.2" font-weight="700" fill="#000" text-anchor="end" textLength="26.6" lengthAdjust="spacingAndGlyphs">2018</text>
<rect x="42.70" y="457.52" width="7.80" height="7.80" fill="#e6e8f0" stroke="#a9aec6" stroke-width="0.9" rx="1.5"/>
<path d="M44.40 461.42H48.80" stroke="#2b3170" stroke-width="1.1"/>
<path d="M46.60 459.22V463.62" stroke="#2b3170" stroke-width="1.1"/>
<text x="53.4" y="466.5" font-size="12.2" font-weight="700" fill="#000" text-anchor="start" textLength="43.4" lengthAdjust="spacingAndGlyphs">London</text>
<text x="194.6" y="466.5" font-size="12.2" font-weight="700" fill="#000" text-anchor="end" textLength="13.2" lengthAdjust="spacingAndGlyphs">18</text>
<text x="330.2" y="466.5" font-size="12.2" font-weight="700" fill="#000" text-anchor="end" textLength="26.6" lengthAdjust="spacingAndGlyphs">5157</text>
<rect x="42.70" y="476.77" width="7.80" height="7.80" fill="#e6e8f0" stroke="#a9aec6" stroke-width="0.9" rx="1.5"/>
<path d="M44.40 480.67H48.80" stroke="#2b3170" stroke-width="1.1"/>
<path d="M46.60 478.47V482.88" stroke="#2b3170" stroke-width="1.1"/>
<text x="53.4" y="485.8" font-size="12.2" font-weight="700" fill="#000" text-anchor="start" textLength="63.2" lengthAdjust="spacingAndGlyphs" clip-path="url(#cA)">Los Angele</text>
<text x="194.6" y="485.8" font-size="12.2" font-weight="700" fill="#000" text-anchor="end" textLength="13.2" lengthAdjust="spacingAndGlyphs">29</text>
<text x="330.2" y="485.8" font-size="12.2" font-weight="700" fill="#000" text-anchor="end" textLength="26.6" lengthAdjust="spacingAndGlyphs">9370</text>
<rect x="30.40" y="495.83" width="7.80" height="7.80" fill="#e6e8f0" stroke="#a9aec6" stroke-width="0.9" rx="1.5"/>
<path d="M32.10 499.73H36.50" stroke="#2b3170" stroke-width="1.1"/>
<text x="40.6" y="505.0" font-size="12.2" font-weight="700" fill="#000" text-anchor="start" textLength="37.0" lengthAdjust="spacingAndGlyphs">Tablet</text>
<line x1="25.60" y1="509.68" x2="332.50" y2="509.68" stroke="#9dc0e4" stroke-width="1"/>
<text x="194.6" y="505.0" font-size="12.2" font-weight="700" fill="#000" text-anchor="end" textLength="13.2" lengthAdjust="spacingAndGlyphs">56</text>
<text x="330.2" y="505.0" font-size="12.2" font-weight="700" fill="#000" text-anchor="end" textLength="33.2" lengthAdjust="spacingAndGlyphs">15320</text>
<rect x="42.70" y="515.28" width="7.80" height="7.80" fill="#e6e8f0" stroke="#a9aec6" stroke-width="0.9" rx="1.5"/>
<path d="M44.40 519.18H48.80" stroke="#2b3170" stroke-width="1.1"/>
<path d="M46.60 516.99V521.38" stroke="#2b3170" stroke-width="1.1"/>
<text x="53.4" y="524.3" font-size="12.2" font-weight="700" fill="#000" text-anchor="start" textLength="63.2" lengthAdjust="spacingAndGlyphs" clip-path="url(#cA)">Los Angele</text>
<text x="194.6" y="524.3" font-size="12.2" font-weight="700" fill="#000" text-anchor="end" textLength="13.2" lengthAdjust="spacingAndGlyphs">40</text>
<text x="330.2" y="524.3" font-size="12.2" font-weight="700" fill="#000" text-anchor="end" textLength="26.6" lengthAdjust="spacingAndGlyphs">7605</text>
<rect x="42.70" y="534.54" width="7.80" height="7.80" fill="#e6e8f0" stroke="#a9aec6" stroke-width="0.9" rx="1.5"/>
<path d="M44.40 538.44H48.80" stroke="#2b3170" stroke-width="1.1"/>
<path d="M46.60 536.24V540.64" stroke="#2b3170" stroke-width="1.1"/>
<text x="53.4" y="543.5" font-size="12.2" font-weight="700" fill="#000" text-anchor="start" textLength="57.4" lengthAdjust="spacingAndGlyphs">New York</text>
<text x="194.6" y="543.5" font-size="12.2" font-weight="700" fill="#000" text-anchor="end" textLength="13.2" lengthAdjust="spacingAndGlyphs">16</text>
<text x="330.2" y="543.5" font-size="12.2" font-weight="700" fill="#000" text-anchor="end" textLength="26.6" lengthAdjust="spacingAndGlyphs">7715</text>
<rect x="25.60" y="547.79" width="306.90" height="19.25" fill="#dde6f1"/>
<line x1="25.60" y1="548.29" x2="332.50" y2="548.29" stroke="#9dc0e4" stroke-width="1.2"/>
<text x="28.0" y="562.8" font-size="12.2" font-weight="700" fill="#000" text-anchor="start" textLength="68.6" lengthAdjust="spacingAndGlyphs">Grand Total</text>
<text x="194.6" y="562.8" font-size="12.2" font-weight="700" fill="#000" text-anchor="end" textLength="19.9" lengthAdjust="spacingAndGlyphs">366</text>
<text x="330.2" y="562.8" font-size="12.2" font-weight="700" fill="#000" text-anchor="end" textLength="33.2" lengthAdjust="spacingAndGlyphs">69686</text>
<rect x="25.60" y="682.58" width="306.90" height="19.25" fill="#dde6f1"/>
<line x1="25.60" y1="702.34" x2="332.50" y2="702.34" stroke="#9dc0e4" stroke-width="1.2"/>
<text x="28.5" y="697.6" font-size="12.2" font-weight="700" fill="#000" text-anchor="start" textLength="65.4" lengthAdjust="spacingAndGlyphs">Row Labels</text>
<rect x="97.60" y="684.38" width="15.40" height="15.60" fill="#f6f6f6" stroke="#b9b9b9" stroke-width="0.9" rx="1.2"/>
<path d="M102.30 691.38H109.10L105.70 695.08Z" fill="#707070"/>
<text x="116.8" y="697.6" font-size="12.2" font-weight="700" fill="#000" text-anchor="start" textLength="75.6" lengthAdjust="spacingAndGlyphs">Sum of Stock</text>
<text x="199.5" y="697.6" font-size="12.2" font-weight="700" fill="#000" text-anchor="start" textLength="126.0" lengthAdjust="spacingAndGlyphs">Sum of Reorder Level</text>
<rect x="24.60" y="682.38" width="89.60" height="19.65" fill="none" stroke="#137a43" stroke-width="1.9"/>
<rect x="111.60" y="699.24" width="5.20" height="5.20" fill="#137a43" stroke="#fff" stroke-width="0.9"/>
<rect x="30.40" y="707.63" width="7.80" height="7.80" fill="#e6e8f0" stroke="#a9aec6" stroke-width="0.9" rx="1.5"/>
<path d="M32.10 711.53H36.50" stroke="#2b3170" stroke-width="1.1"/>
<text x="40.6" y="716.8" font-size="12.2" font-weight="700" fill="#000" text-anchor="start" textLength="55.0" lengthAdjust="spacingAndGlyphs">Furniture</text>
<text x="194.6" y="716.8" font-size="12.2" font-weight="700" fill="#000" text-anchor="end" textLength="19.9" lengthAdjust="spacingAndGlyphs">482</text>
<text x="330.2" y="716.8" font-size="12.2" font-weight="700" fill="#000" text-anchor="end" textLength="19.9" lengthAdjust="spacingAndGlyphs">122</text>
<circle cx="112.0" cy="675.8" r="14.1" fill="#8b0000"/>
<clipPath id="c1"><rect x="100.0" y="661.8" width="24" height="18.2"/><rect x="110.25" y="679.8" width="4.5" height="7"/></clipPath>
<text x="112.0" y="683.6" font-size="24" font-weight="700" fill="#fff" text-anchor="middle" clip-path="url(#c1)">1</text>
<path d="M612.4 169.6V177.6" stroke="#5b6270" stroke-width="1.2"/>
<g filter="url(#psh)"><rect x="458" y="122" width="152.3" height="91.3" rx="5" fill="#fff" stroke="#808080" stroke-width="1"/></g>
<g transform="translate(471.90 128.10) scale(0.985)">
<rect x="0.6" y="0.6" width="25.8" height="25.8" fill="#f9f9f9"/>
<path d="M11.6 26.4H0.65V0.65H26.4V11.4" fill="none" stroke="#505050" stroke-width="1.25" stroke-linejoin="miter"/>
<rect x="3.3" y="3.6" width="4.8" height="4.4" fill="#cfccc9" stroke="#8d8a87" stroke-width="0.9"/>
<rect x="11" y="3.6" width="12.4" height="4.4" fill="#cfccc9" stroke="#8d8a87" stroke-width="0.9"/>
<rect x="3.3" y="11.2" width="4.8" height="12.4" fill="#cfccc9" stroke="#8d8a87" stroke-width="0.9"/>
</g>
<g transform="translate(471.90 128.10)">
<path d="M14.7 18.2L22.1 10.2L28.6 16.6L20.8 24.6Z" fill="#fbfbfb" stroke="#a844bf" stroke-width="1.1" stroke-linejoin="round"/>
<path d="M10.8 21.9L14.7 18.2L20.8 24.6L16.9 28.2Z" fill="#c683d6" stroke="#a844bf" stroke-width="1.1" stroke-linejoin="round"/>
</g>
<text x="472.8" y="169.9" font-size="11.6" font-weight="400" fill="#3b3b3b" stroke="#3b3b3b" stroke-width="0.22" text-anchor="start" textLength="24.4" lengthAdjust="spacingAndGlyphs">Clear</text>
<path d="M482.35 180.28 L484.60 182.53 L486.85 180.28" fill="none" stroke="#3a3a3a" stroke-width="1.25" stroke-linecap="round" stroke-linejoin="round"/>
<g transform="translate(514.10 128.10) scale(0.985)">
<rect x="0.6" y="0.6" width="25.8" height="25.8" fill="#f9f9f9"/>
<path d="M15.4 26.4H0.65V0.65H26.4V17" fill="none" stroke="#505050" stroke-width="1.25" stroke-linejoin="miter"/>
<rect x="3.3" y="3.6" width="4.8" height="4.4" fill="#cfccc9" stroke="#8d8a87" stroke-width="0.9"/>
<rect x="11" y="3.6" width="12.4" height="4.4" fill="#cfccc9" stroke="#8d8a87" stroke-width="0.9"/>
<rect x="3.3" y="11.2" width="4.8" height="12.4" fill="#cfccc9" stroke="#8d8a87" stroke-width="0.9"/>
</g>
<path d="M530.4 139.2V155.3L533.7 151.9L536 156.4L538.7 154.9L536.5 150.6L541.5 150.3Z" fill="#fff" stroke="#2f2f2f" stroke-width="1.1" stroke-linejoin="round"/>
<text x="513.6" y="169.9" font-size="11.6" font-weight="400" fill="#3b3b3b" stroke="#3b3b3b" stroke-width="0.22" text-anchor="start" textLength="27.9" lengthAdjust="spacingAndGlyphs">Select</text>
<path d="M524.55 180.28 L526.80 182.53 L529.05 180.28" fill="none" stroke="#3a3a3a" stroke-width="1.25" stroke-linecap="round" stroke-linejoin="round"/>
<g transform="translate(563.00 128.00) scale(0.993)">
<rect x="0.6" y="0.6" width="25.8" height="25.8" fill="#f9f9f9"/>
<path d="M13 26.4H0.65V0.65H26.4V14.6" fill="none" stroke="#505050" stroke-width="1.25" stroke-linejoin="miter"/>
<rect x="3.3" y="3.6" width="4.8" height="4.4" fill="#cfccc9" stroke="#8d8a87" stroke-width="0.9"/>
<rect x="11" y="3.6" width="12.4" height="4.4" fill="#cfccc9" stroke="#8d8a87" stroke-width="0.9"/>
<rect x="3.3" y="11.2" width="4.8" height="12.4" fill="#cfccc9" stroke="#8d8a87" stroke-width="0.9"/>
</g>
<path d="M576.8 150.6H591.6M585.6 144.8L591.8 150.6L585.6 156.4" fill="none" stroke="#2f86d6" stroke-width="1.25" stroke-linecap="round" stroke-linejoin="round"/>
<text x="563.7" y="170.1" font-size="11.6" font-weight="400" fill="#3b3b3b" stroke="#3b3b3b" stroke-width="0.22" text-anchor="start" textLength="25.4" lengthAdjust="spacingAndGlyphs">Move</text>
<text x="551.9" y="184.2" font-size="11.6" font-weight="400" fill="#3b3b3b" stroke="#3b3b3b" stroke-width="0.22" text-anchor="start" textLength="48.4" lengthAdjust="spacingAndGlyphs">PivotTable</text>
<text x="516.0" y="209.6" font-size="11.4" font-weight="400" fill="#4a4a4a" stroke="#4a4a4a" stroke-width="0.22" text-anchor="start" textLength="36.0" lengthAdjust="spacingAndGlyphs">Actions</text>
<rect x="548.40" y="122.70" width="56.00" height="65.90" fill="none" stroke="#f9000a" stroke-width="2.8" filter="url(#rsh)"/>
<circle cx="613.8" cy="194.0" r="14.1" fill="#8b0000"/>
<text x="613.8" y="201.8" font-size="24" font-weight="700" fill="#fff" text-anchor="middle">4</text>
<g filter="url(#dsh)"><rect x="371.9" y="317.4" width="352.7" height="147.5" rx="6" fill="#f0f0f0" stroke="#c4c4c4" stroke-width="1"/></g>
<path d="M372.4 346.4V323.9Q372.4 317.9 378.4 317.9H718.1Q724.1 317.9 724.1 323.9V346.4Z" fill="#e9f6f8"/>
<text x="380.3" y="335.7" font-size="11.8" font-weight="400" fill="#222" stroke="#222" stroke-width="0.22" text-anchor="start" textLength="83.2" lengthAdjust="spacingAndGlyphs">Move PivotTable</text>
<line x1="609.00" y1="331.30" x2="618.00" y2="331.30" stroke="#b0b0b0" stroke-width="1"/>
<rect x="652.80" y="326.80" width="8.80" height="8.80" fill="none" stroke="#222" stroke-width="1.1" rx="1"/>
<path d="M697.2 326.6L706.8 336.2M706.8 326.6L697.2 336.2" stroke="#222" stroke-width="1.1"/>
<text x="378.8" y="364.0" font-size="11.4" font-weight="400" fill="#1f1f1f" stroke="#1f1f1f" stroke-width="0.22" text-anchor="start" textLength="289.7" lengthAdjust="spacingAndGlyphs">Choose where you want the PivotTable report to be placed</text>
<line x1="674.00" y1="359.60" x2="717.80" y2="359.60" stroke="#d9d9d9" stroke-width="1"/>
<circle cx="393" cy="380" r="5.9" fill="#f8f8f8" stroke="#7a7a7a" stroke-width="1"/>
<text x="403.5" y="383.6" font-size="11.4" font-weight="400" fill="#1f1f1f" stroke="#1f1f1f" stroke-width="0.22" text-anchor="start" textLength="78.3" lengthAdjust="spacingAndGlyphs">New Worksheet</text>
<line x1="403.60" y1="384.80" x2="411.40" y2="384.80" stroke="#1f1f1f" stroke-width="0.9"/>
<circle cx="393" cy="398.3" r="6.3" fill="#0b68c3"/><circle cx="393" cy="398.3" r="2.4" fill="#fff"/>
<text x="403.5" y="402.2" font-size="11.4" font-weight="400" fill="#1f1f1f" stroke="#1f1f1f" stroke-width="0.22" text-anchor="start" textLength="94.7" lengthAdjust="spacingAndGlyphs">Existing Worksheet</text>
<line x1="403.60" y1="403.40" x2="410.00" y2="403.40" stroke="#1f1f1f" stroke-width="0.9"/>
<text x="421.8" y="422.2" font-size="11.4" font-weight="400" fill="#1f1f1f" stroke="#1f1f1f" stroke-width="0.22" text-anchor="start" textLength="44.2" lengthAdjust="spacingAndGlyphs">Location:</text>
<line x1="421.80" y1="423.60" x2="427.00" y2="423.60" stroke="#1f1f1f" stroke-width="0.9"/>
<rect x="472.40" y="410.20" width="245.40" height="17.60" fill="#fff" stroke="#8f8f8f" stroke-width="0.9"/>
<text x="479.4" y="423.0" font-size="10.8" font-weight="400" fill="#111" stroke="#111" stroke-width="0.22" text-anchor="start" textLength="49.6" lengthAdjust="spacingAndGlyphs">Pivot!$E$3</text>
<line x1="530.20" y1="413.40" x2="530.20" y2="425.20" stroke="#111" stroke-width="1"/>
<rect x="697.80" y="410.90" width="18.70" height="15.60" fill="#fdfdfd" stroke="#c9c9c9" stroke-width="1" rx="3"/>
<path d="M707.2 421V415.2M704.4 417.8L707.2 414.8L710 417.8" fill="none" stroke="#111" stroke-width="1.5" stroke-linejoin="round"/><path d="M703.4 423H711" stroke="#111" stroke-width="1.3"/>
<rect x="565.40" y="436.80" width="70.60" height="19.60" fill="#fdfdfd" stroke="#2a7bd0" stroke-width="1.2" rx="4"/>
<text x="600.6" y="450.4" font-size="11.4" font-weight="400" fill="#111" stroke="#111" stroke-width="0.22" text-anchor="middle" textLength="14.4" lengthAdjust="spacingAndGlyphs">OK</text>
<rect x="646.20" y="436.80" width="70.60" height="19.60" fill="#fdfdfd" stroke="#d0d0d0" stroke-width="1" rx="4"/>
<text x="681.5" y="450.4" font-size="11.4" font-weight="400" fill="#111" stroke="#111" stroke-width="0.22" text-anchor="middle" textLength="32.6" lengthAdjust="spacingAndGlyphs">Cancel</text>
<path d="M716.4 463.4L723.4 456.4M719.4 463.4L723.4 459.4" stroke="#9a9a9a" stroke-width="0.9"/>
<rect x="472.00" y="408.30" width="65.60" height="21.20" fill="none" stroke="#f9000a" stroke-width="2.8" filter="url(#rsh)"/>
<rect x="562.80" y="431.80" width="75.70" height="27.00" fill="none" stroke="#f9000a" stroke-width="2.8" filter="url(#rsh)"/>
<circle cx="541.4" cy="405.5" r="14.1" fill="#8b0000"/>
<text x="541.4" y="413.3" font-size="24" font-weight="700" fill="#fff" text-anchor="middle">5</text>
<circle cx="558.7" cy="463.1" r="14.1" fill="#8b0000"/>
<text x="558.7" y="470.9" font-size="24" font-weight="700" fill="#fff" text-anchor="middle">6</text>
</svg></body></html>
